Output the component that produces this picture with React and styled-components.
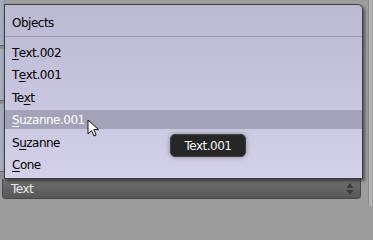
import React from "react";
import styled, { createGlobalStyle } from "styled-components";

const GlobalStyle = createGlobalStyle`
  html, body {
    margin: 0;
    padding: 0;
    background: #9d9d9d;
    font-family: "DejaVu Sans", "Liberation Sans", sans-serif;
  }
`;

const items = [
  { before: "", key: "T", after: "ext.002" },
  { before: "T", key: "e", after: "xt.001" },
  { before: "Te", key: "x", after: "t" },
  { before: "", key: "S", after: "uzanne.001", active: true },
  { before: "S", key: "u", after: "zanne" },
  { before: "", key: "C", after: "one" },
];

// heights of the tab pieces peeking out at the left edge
const tabs = [46, 52, 68];

const App = () => (
  <Screen>
    <GlobalStyle />
    <Body>
      <SideTabs>
        {tabs.map((h, i) => (
          <Tab key={i} style={{ height: h }} />
        ))}
      </SideTabs>
      <Menu>
        <Header>Objects</Header>
        <Separator />
        <List>
          {items.map((item, index) => (
            <Item key={index} $active={item.active}>
              {item.before}
              <Key>{item.key}</Key>
              {item.after}
            </Item>
          ))}
        </List>
      </Menu>
      <RightEdge />
    </Body>
    <Field>
      <FieldText>Text</FieldText>
      <Arrows width="8" height="14" viewBox="0 0 8 14">
        <path d="M4 1 L7.5 6 L0.5 6 Z" fill="#3a3a3a" />
        <path d="M4 13 L7.5 8 L0.5 8 Z" fill="#3a3a3a" />
      </Arrows>
    </Field>

    <Cursor width="13" height="19" viewBox="0 0 13 19">
      <path
        d="M1 1 L1 15 L4.5 11.5 L7 17 L9.2 16 L6.8 10.6 L11.5 10.6 Z"
        fill="#ffffff"
        stroke="#111"
        strokeWidth="1"
        strokeLinejoin="round"
      />
    </Cursor>
    <Tooltip>Text.001</Tooltip>
  </Screen>
);

const Screen = styled.div`
  position: relative;
  width: 373px;
  height: 206px;
  overflow: hidden;
  background: #9d9d9d;
  padding-top: 4px;
  box-sizing: border-box;
`;
const Body = styled.div`
  display: flex;
  height: 175px;
`;
const SideTabs = styled.div`
  width: 4px;
  display: flex;
  flex-direction: column;
  gap: 3px;
  margin-top: -4px;
  overflow: hidden;
  background: #8e8e8e;
`;
const Tab = styled.div`
  background: linear-gradient(90deg, #a9b1bf 0%, #99a2b2 100%);
  border-bottom: 1px solid #5d6470;
  box-sizing: border-box;
`;
const Menu = styled.div`
  width: 357px;
  display: flex;
  flex-direction: column;
  background: linear-gradient(180deg, #bbb9d2 0%, #d3d1e9 100%);
  border: 1px solid #3d3d3f;
  border-radius: 0 5px 0 0;
  box-shadow: 2px 2px 3px rgba(0, 0, 0, 0.45);
  position: relative;
  z-index: 1;
`;
const Header = styled.div`
  height: 31px;
  display: flex;
  align-items: center;
  padding-left: 7px;
  padding-top: 4px;
  box-sizing: border-box;
  font-size: 12px;
  letter-spacing: -0.5px;
  color: #000;
`;
const Separator = styled.div`
  height: 1px;
  background: #9e9cb3;
`;
const List = styled.div`
  display: flex;
  flex-direction: column;
  gap: 3.6px;
  padding-top: 5.5px;
`;
const Item = styled.div`
  height: 19px;
  display: flex;
  align-items: center;
  padding-left: 7px;
  padding-top: 1px;
  box-sizing: border-box;
  font-size: 12px;
  letter-spacing: -0.5px;
  color: ${(p) => (p.$active ? "#ffffff" : "#000000")};
  background: ${(p) => (p.$active ? "#a4a2b8" : "transparent")};
  white-space: pre;
`;
const Key = styled.span`
  text-decoration: underline;
  text-underline-offset: 2px;
`;
const RightEdge = styled.div`
  margin-left: 5px;
  width: 1px;
  margin-top: -4px;
  height: 210px;
  background: #8a8a8a;
  border-right: 3px solid #b3b3b3;
`;
const Field = styled.div`
  width: 359px;
  height: 20px;
  margin-left: 2px;
  display: flex;
  align-items: center;
  justify-content: space-between;
  padding: 0 6px 0 8px;
  box-sizing: border-box;
  background: linear-gradient(180deg, #6f6f6f 0%, #585858 100%);
  border: 1px solid #474747;
  border-top: none;
  border-radius: 0 0 4px 4px;
`;
const FieldText = styled.span`
  font-size: 12px;
  letter-spacing: -0.5px;
  color: #ececec;
`;
const Arrows = styled.svg`
  display: block;
`;
const Cursor = styled.svg`
  position: absolute;
  left: 87px;
  top: 119px;
  z-index: 3;
`;
const Tooltip = styled.div`
  position: absolute;
  left: 170px;
  top: 134px;
  width: 76px;
  height: 23px;
  box-sizing: border-box;
  display: flex;
  align-items: center;
  justify-content: center;
  background: #262626;
  border: 1px solid #3e3e3e;
  border-radius: 5px;
  box-shadow: 0 0 5px rgba(0, 0, 0, 0.35);
  color: #f4f4f4;
  font-size: 12px;
  letter-spacing: -0.5px;
  z-index: 2;
`;

export default App;
